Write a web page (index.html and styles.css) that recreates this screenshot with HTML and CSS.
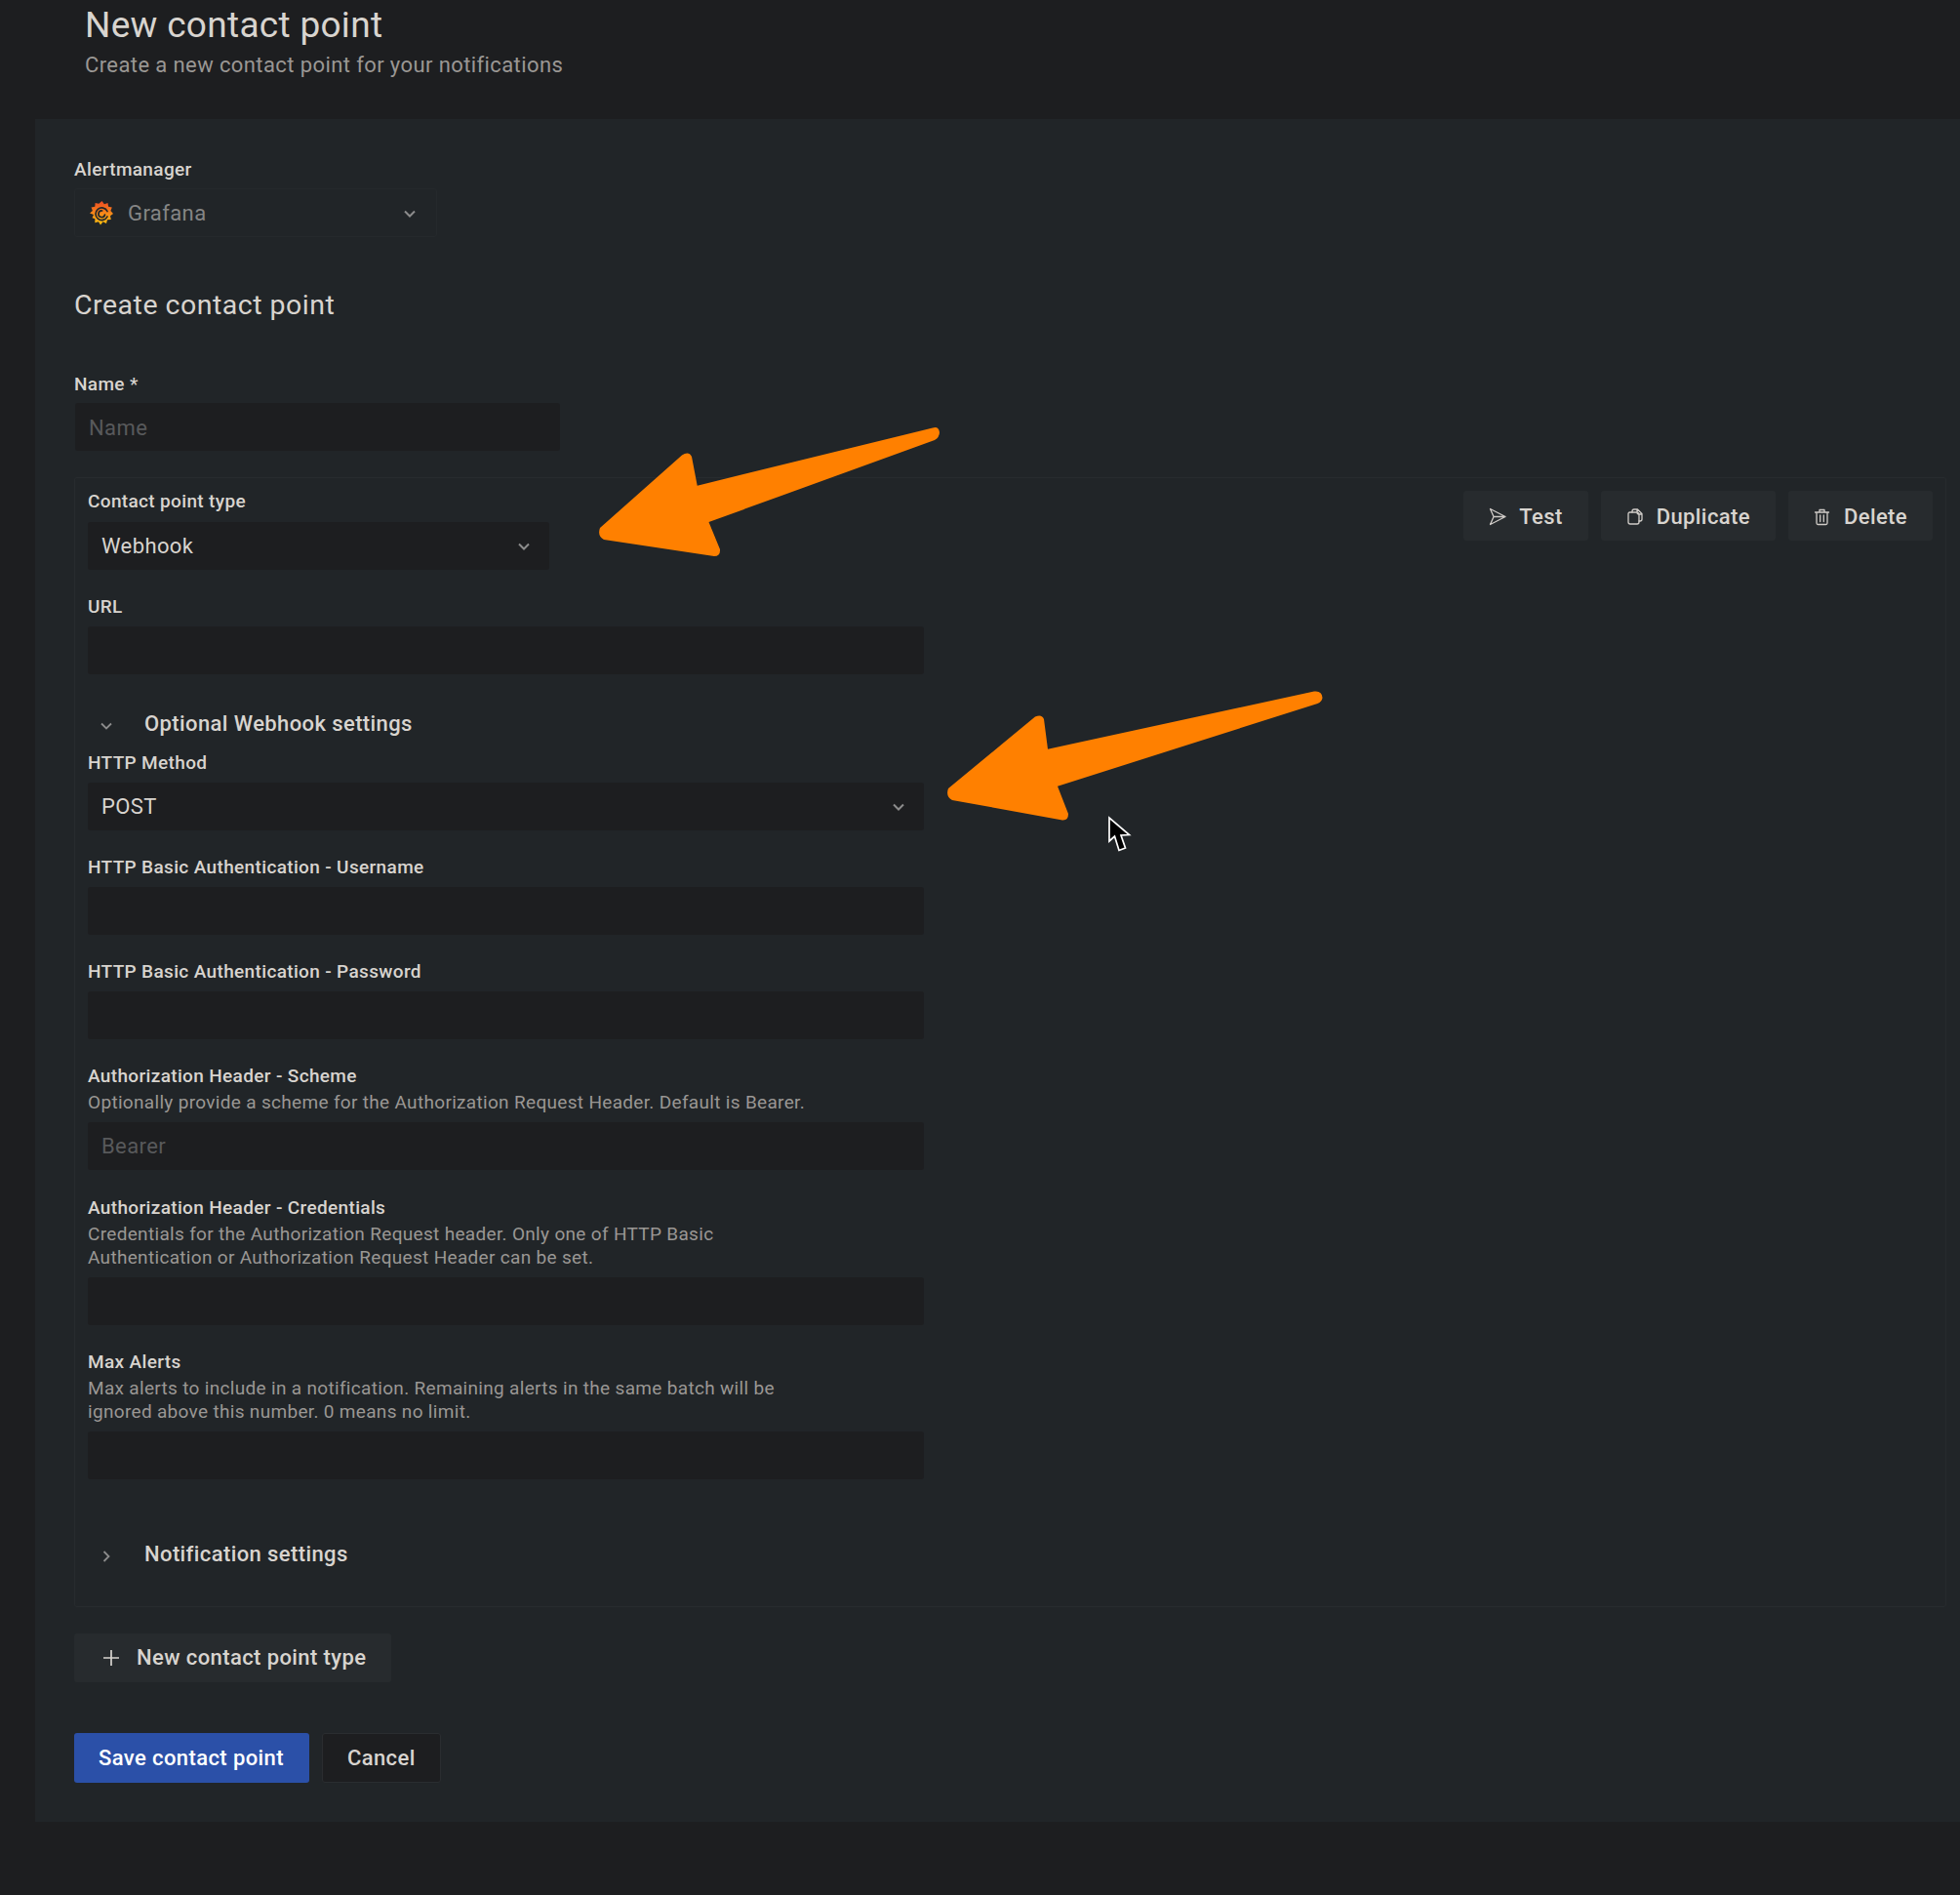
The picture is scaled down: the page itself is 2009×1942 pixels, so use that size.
FILE: index.html
```html
<!DOCTYPE html>
<html lang="en">
<head>
<meta charset="utf-8">
<title>New contact point</title>
<link rel="stylesheet" href="styles.css">
</head>
<body>
<header class="page-header">
  <h1 class="page-title">New contact point</h1>
  <p class="page-sub">Create a new contact point for your notifications</p>
</header>
<main class="panel">
  <label class="label">Alertmanager</label>
  <div class="am-select">
    <svg class="logo" viewBox="0 0 24 25">
      <defs><linearGradient id="g" x1="0" y1="0" x2="0" y2="1"><stop offset="0" stop-color="#ee4a24"/><stop offset="1" stop-color="#fcc20f"/></linearGradient></defs>
      <path fill="url(#g)" d="M12.500 0l2.400 3.200 3.600-1.200.6 3.800 3.700.8-1.400 3.500L24 13l-3 2.200.8 3.800-3.800.3-1 3.700-3.400-1.700-2.600 3.200-2-3.300-3.700 1 .1-3.900L2.500 17.300 4 14 0 12.500l2.900-2.600-1.400-3.500 3.800-.7.300-3.800 3.700.9z"/>
      <path fill="none" stroke="#22262a" stroke-width="1.700" stroke-linecap="round" d="M18 10.500A6.300 6.300 0 1 0 18 16M15.500 14a3.300 3.300 0 1 1-2.800-4"/>
    </svg>
    <span class="am-value">Grafana</span>
    <svg class="chev am-chev" viewBox="0 0 12 8"><path d="M1 1.500l5 5 5-5"/></svg>
  </div>
  <h2 class="section-title">Create contact point</h2>
  <label class="label name-label">Name *</label>
  <input class="input name-input" placeholder="Name">

  <section class="receiver">
    <div class="receiver-form">
      <label class="label type-label">Contact point type</label>
      <div class="input select type-select"><span>Webhook</span><svg class="chev" viewBox="0 0 12 8"><path d="M1 1.500l5 5 5-5"/></svg></div>

      <label class="label url-label">URL</label>
      <input class="input">

      <div class="collapse-head optional-head">
        <svg class="toggle" viewBox="0 0 12 8"><path d="M1 1.500l5 5 5-5"/></svg>
        <span>Optional Webhook settings</span>
      </div>

      <div class="field">
        <label class="label">HTTP Method</label>
        <div class="input select"><span>POST</span><svg class="chev" viewBox="0 0 12 8"><path d="M1 1.500l5 5 5-5"/></svg></div>
      </div>
      <div class="field">
        <label class="label">HTTP Basic Authentication - Username</label>
        <input class="input">
      </div>
      <div class="field">
        <label class="label">HTTP Basic Authentication - Password</label>
        <input class="input">
      </div>
      <div class="field field-tall">
        <label class="label">Authorization Header - Scheme</label>
        <p class="desc">Optionally provide a scheme for the Authorization Request Header. Default is Bearer.</p>
        <input class="input" placeholder="Bearer">
      </div>
      <div class="field">
        <label class="label">Authorization Header - Credentials</label>
        <p class="desc">Credentials for the Authorization Request header. Only one of HTTP Basic<br>Authentication or Authorization Request Header can be set.</p>
        <input class="input">
      </div>
      <div class="field">
        <label class="label">Max Alerts</label>
        <p class="desc">Max alerts to include in a notification. Remaining alerts in the same batch will be<br>ignored above this number. 0 means no limit.</p>
        <input class="input">
      </div>

      <div class="collapse-head notif-head">
        <svg class="toggle toggle-right" viewBox="0 0 8 12"><path d="M1.500 1l5 5-5 5"/></svg>
        <span>Notification settings</span>
      </div>
    </div>
    <div class="receiver-actions">
      <button class="btn">
        <svg class="btn-icon" viewBox="0 0 21 21"><path d="M3.500 2.500L19 10.500 3.500 18.500 7 10.500zM7 10.500H19"/></svg>Test
      </button>
      <button class="btn">
        <svg class="btn-icon" viewBox="0 0 21 21"><path d="M8 6V5a2 2 0 0 1 2-2h3.500L18 7.500V13a2 2 0 0 1-2 2h-1M13 3v3a2 2 0 0 0 2 2h3"/><path d="M5.500 6H12a2.500 2.500 0 0 1 3 2.500V16a2 2 0 0 1-2 2H6a2 2 0 0 1-2-2V7.500A1.500 1.500 0 0 1 5.500 6z"/></svg>Duplicate
      </button>
      <button class="btn">
        <svg class="btn-icon" viewBox="0 0 21 21"><path d="M3.500 6h14M8 6V3.500h5V6M5 6v11a1.500 1.500 0 0 0 1.500 1.500h8A1.500 1.500 0 0 0 16 17V6M8.700 9v6.500M12.300 9v6.500"/></svg>Delete
      </button>
    </div>
  </section>

  <button class="btn new-type">
    <svg class="plus" viewBox="0 0 18 18"><path d="M9 1v16M1 9h16"/></svg>New contact point type
  </button>

  <div class="form-actions">
    <button class="btn btn-primary">Save contact point</button>
    <button class="btn btn-outline">Cancel</button>
  </div>
</main>

<svg class="overlay" width="2009" height="1942" viewBox="0 0 2009 1942">
  <path fill="#ff8000" d="M956 438.500Q962 436.500 963 443Q963 448 958 451L726.500 535L738 563Q738.500 570 732 570L619 553Q612 549 615 541L699 466.500Q706 462 709 468L714.700 497.700z"/>
  <path fill="#ff8000" d="M1347 708.500Q1355 707.500 1355.500 715Q1355 719 1350.500 721L1084 805.700L1095 834Q1095 841 1089 840.500L976 820Q969 816 972 808L1061 734.500Q1068 731.500 1070 737L1074 767.700z"/>
  <path fill="#000" stroke="#fff" stroke-width="1.700" d="M1137 838V862L1142.500 857L1147 871.500L1153.500 869L1149 856L1157.500 855.500z"/>
</svg>
</body>
</html>
```
FILE: styles.css
```css
* { box-sizing: border-box; }
html, body { margin: 0; padding: 0; }
body {
  position: relative;
  min-height: 1942px;
  background: #1d1e20;
  color: #d8d4cf;
  font-family: Roboto, "Liberation Sans", sans-serif;
  font-size: 22px;
  letter-spacing: 0.4px;
}
.page-header { height: 122px; padding: 6px 0 0 87px; }
.page-title { margin: 0; font-size: 37px; line-height: 40px; font-weight: 400; letter-spacing: 0.3px; color: #d8d4cf; }
.page-sub { margin: 7px 0 0; font-size: 22px; line-height: 28px; color: #9a9794; }

.panel {
  margin-left: 36px;
  height: 1745px;
  padding: 40px 14px 40px 40px;
  background: #212528;
}
.label {
  display: block;
  height: 24px;
  margin-bottom: 8px;
  font-size: 19px;
  line-height: 24px;
  font-weight: 500;
  letter-spacing: 0.35px;
  color: #d8d4cf;
}
.am-select {
  display: flex;
  align-items: center;
  width: 372px;
  height: 50px;
  margin-top: -1px;
  padding: 0 21px 0 15px;
  border: 1px solid #25292c;
  border-radius: 3px;
  color: #858585;
}
.logo { width: 24px; height: 25px; flex: none; }
.am-value { margin-left: 15px; }
.chev { width: 12px; height: 8px; margin-left: auto; flex: none; fill: none; stroke: #8c8c8c; stroke-width: 2; }
.am-chev { margin-top: 2px; }
.section-title { margin: 52px 0 51px; font-size: 28.5px; line-height: 36px; font-weight: 400; letter-spacing: 0.5px; color: #d8d4cf; }
.name-label { margin-bottom: 7px; }
.input {
  display: block;
  width: 857px;
  height: 49px;
  padding: 0 14px;
  background: #1d1e20;
  border: 0;
  border-radius: 3px;
  outline: 0;
  color: #d8d4cf;
  font: 400 22px/49px Roboto, "Liberation Sans", sans-serif;
  letter-spacing: 0.4px;
}
.input::placeholder { color: #58595b; opacity: 1; }
.name-input { width: 497px; margin-left: 1px; padding-top: 1px; }
.select { display: flex; align-items: center; padding-right: 20px; }
.type-select { width: 473px; }
.type-label { margin-bottom: 9px; }

.receiver {
  display: flex;
  width: 1919px;
  height: 1158px;
  margin-top: 27px;
  padding: 12px 13px 0 13px;
  border: 1px solid #272b2e;
  border-radius: 3px;
}
.receiver-form { flex: none; width: 857px; }
.url-label { margin-top: 26px; }
.collapse-head { display: flex; align-items: center; height: 28px; font-size: 22px; line-height: 28px; font-weight: 500; white-space: nowrap; }
.collapse-head span { margin-left: 33px; }
.toggle { width: 12px; height: 8px; margin-left: 13px; flex: none; fill: none; stroke: #8c8c8c; stroke-width: 1.800; margin-top: 3px; }
.toggle-right { width: 8px; height: 12px; margin-left: 15px; }
.toggle-right + span { margin-left: 35px; }
.optional-head { margin: 37px 0 14px; }
.field { margin-bottom: 26px; }
.field-tall { margin-bottom: 27px; }
.desc { margin: -5px 0 8px; font-size: 19px; line-height: 24px; letter-spacing: 0.32px; color: #9a9794; white-space: nowrap; }
.notif-head { margin-top: 63px; }

.receiver-actions { display: flex; gap: 13px; margin-left: auto; margin-top: 1px; align-items: flex-start; }
.receiver-actions .btn { padding: 2px 26px 0 24px; }
.btn {
  display: inline-flex;
  align-items: center;
  height: 51px;
  padding: 0 26px;
  background: #272b2e;
  border: 0;
  border-radius: 3px;
  color: #d8d4cf;
  font: 500 22px/1 Roboto, "Liberation Sans", sans-serif;
  letter-spacing: 0.4px;
  white-space: nowrap;
}
.btn-icon { width: 21px; height: 21px; margin-right: 12px; fill: none; stroke: #d0ccc8; stroke-width: 1.300; stroke-linejoin: round; stroke-linecap: round; }
.new-type { display: flex; height: 50px; margin-top: 27px; padding: 0 26px 0 29px; }
.plus { width: 18px; height: 18px; margin-right: 17px; fill: none; stroke: #d8d4cf; stroke-width: 1.700; }
.form-actions { display: flex; gap: 13px; margin-top: 52px; }
.btn-primary { background: #2b50a8; color: #fff; padding: 0 26px 0 25px; }
.btn-outline { background: #1d1e20; border: 1px solid #2a2d30; padding: 0 25px; }

.overlay { position: absolute; left: 0; top: 0; pointer-events: none; }
```
